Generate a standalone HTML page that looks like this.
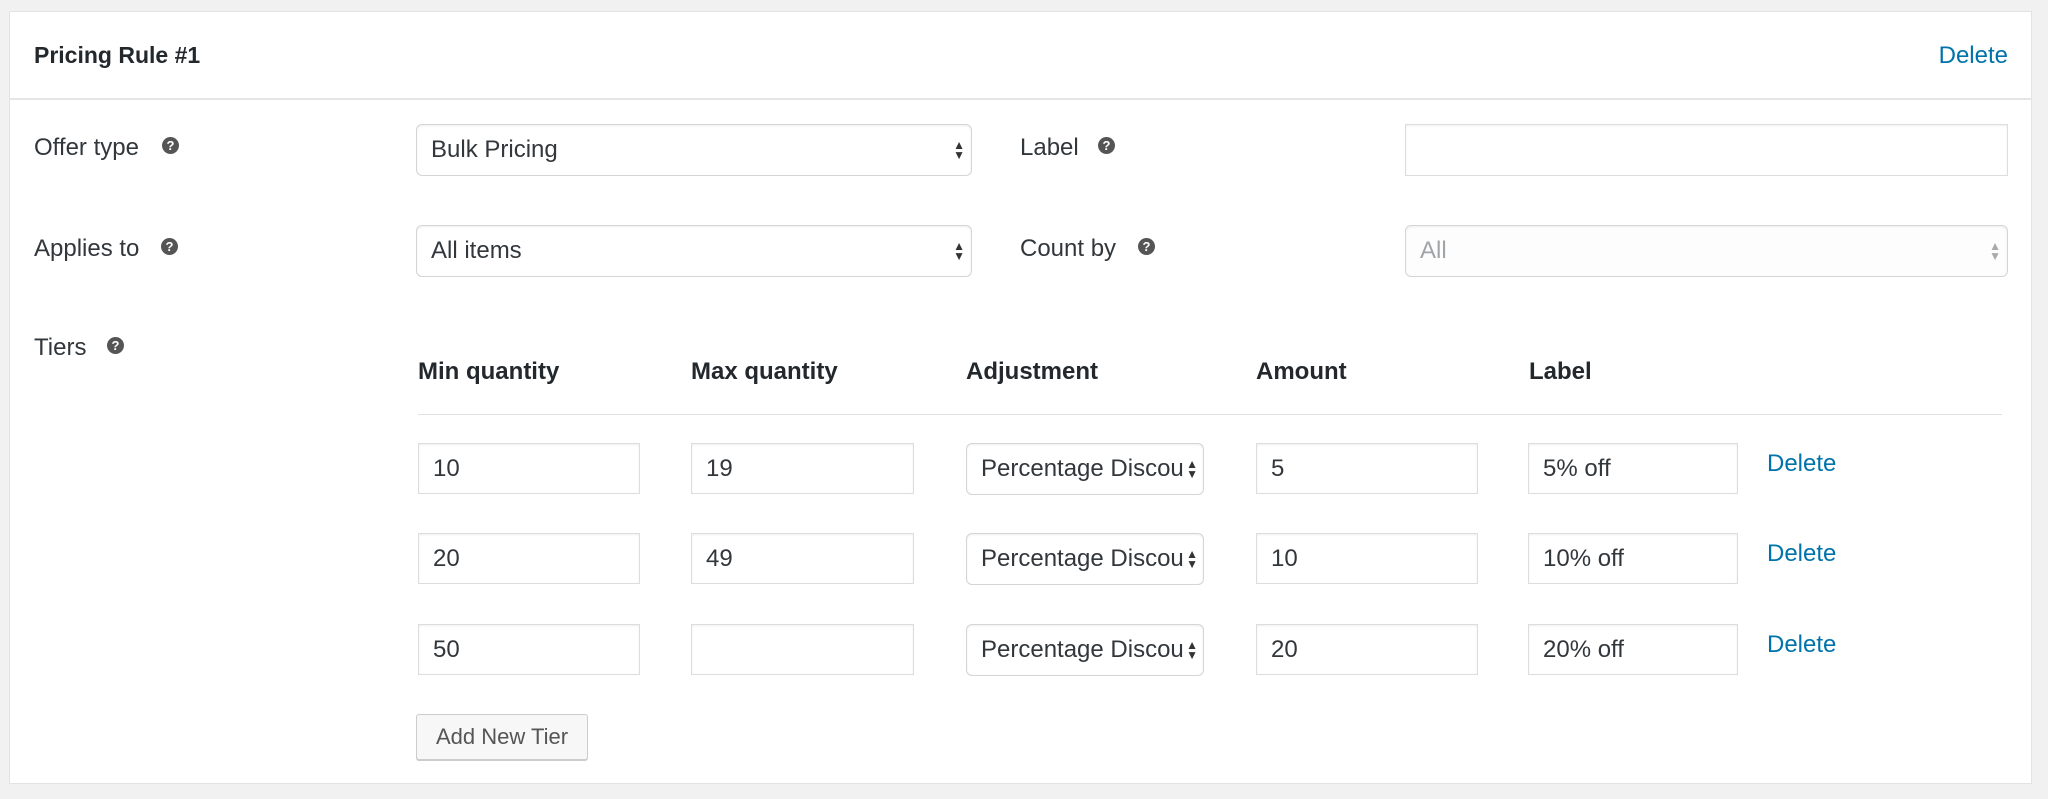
<!DOCTYPE html>
<html><head><meta charset="utf-8"><style>
*{box-sizing:border-box;margin:0;padding:0}
body{width:2048px;height:799px;background:#f1f1f1;font-family:"Liberation Sans",Arial,sans-serif;color:#32373c;position:relative;overflow:hidden}
.panel{position:absolute;left:9px;top:11px;width:2023px;height:773px;background:#fff;border:1px solid #e3e3e3}
.hline{position:absolute;left:9px;top:98px;width:2023px;height:2px;background:#e5e5e5}
.a{position:absolute;white-space:nowrap}
.t{font-size:24px;line-height:26px;color:#32373c}
.b{font-weight:bold;color:#23282d}
.link{color:#0073aa;font-size:24px;line-height:26px}
.box{position:absolute;border:1px solid #ddd;box-shadow:inset 0 1px 2px rgba(0,0,0,.07);background:#fff;font-size:24px;color:#32373c;padding-left:14px;display:flex;align-items:center;white-space:nowrap;overflow:hidden}
.sel{border-radius:6px;border-color:#d5d5d5}
.sel span{display:block;overflow:hidden;white-space:nowrap}
.arr{position:absolute;right:6px;top:50%;transform:translateY(-50%);font-size:12px;line-height:10px;color:#333;text-align:center}
.help{position:absolute;width:17px;height:17px;border-radius:50%;background:#555;color:#fff;font-size:13px;font-weight:bold;line-height:17px;text-align:center}
.btn{position:absolute;left:416px;top:714px;width:172px;height:46px;border:1px solid #ccc;border-radius:3px;background:#f7f7f7;box-shadow:0 1px 0 #ccc;font-size:22px;color:#555;display:flex;align-items:center;justify-content:center}
</style></head><body>
<div class="panel"></div>
<div class="hline"></div>
<div class="a t b" style="left:34px;top:42px;font-size:23px">Pricing Rule #1</div>
<div class="a link" style="right:40px;top:43px">Delete</div>

<div class="a t" style="left:34px;top:135px">Offer type</div><div class="help" style="left:162px;top:137px">?</div>
<div class="box sel" style="left:416px;top:124px;width:556px;height:52px"><span>Bulk Pricing</span><div class="arr">▲<br>▼</div></div>
<div class="a t" style="left:1020px;top:135px">Label</div><div class="help" style="left:1098px;top:137px">?</div>
<div class="box" style="left:1405px;top:124px;width:603px;height:52px"></div>

<div class="a t" style="left:34px;top:236px">Applies to</div><div class="help" style="left:161px;top:238px">?</div>
<div class="box sel" style="left:416px;top:225px;width:556px;height:52px"><span>All items</span><div class="arr">▲<br>▼</div></div>
<div class="a t" style="left:1020px;top:236px">Count by</div><div class="help" style="left:1138px;top:238px">?</div>
<div class="box sel" style="left:1405px;top:225px;width:603px;height:52px;color:#a0a5aa;background:#fdfdfd"><span>All</span><div class="arr" style="color:#aaa">▲<br>▼</div></div>

<div class="a t" style="left:34px;top:335px">Tiers</div><div class="help" style="left:107px;top:337px">?</div>

<div class="a t b" style="left:418px;top:359px">Min quantity</div>
<div class="a t b" style="left:691px;top:359px">Max quantity</div>
<div class="a t b" style="left:966px;top:359px">Adjustment</div>
<div class="a t b" style="left:1256px;top:359px">Amount</div>
<div class="a t b" style="left:1529px;top:359px">Label</div>
<div class="a" style="left:418px;top:414px;width:1584px;height:1px;background:#e1e1e1"></div>

<div class="box" style="left:418px;top:443px;width:222px;height:51px">10</div>
<div class="box" style="left:691px;top:443px;width:223px;height:51px">19</div>
<div class="box sel" style="left:966px;top:443px;width:238px;height:52px"><span style="width:204px">Percentage Discount</span><div class="arr" style="right:5px">▲<br>▼</div></div>
<div class="box" style="left:1256px;top:443px;width:222px;height:51px">5</div>
<div class="box" style="left:1528px;top:443px;width:210px;height:51px">5% off</div>
<div class="a link" style="left:1767px;top:451px">Delete</div>

<div class="box" style="left:418px;top:533px;width:222px;height:51px">20</div>
<div class="box" style="left:691px;top:533px;width:223px;height:51px">49</div>
<div class="box sel" style="left:966px;top:533px;width:238px;height:52px"><span style="width:204px">Percentage Discount</span><div class="arr" style="right:5px">▲<br>▼</div></div>
<div class="box" style="left:1256px;top:533px;width:222px;height:51px">10</div>
<div class="box" style="left:1528px;top:533px;width:210px;height:51px">10% off</div>
<div class="a link" style="left:1767px;top:541px">Delete</div>

<div class="box" style="left:418px;top:624px;width:222px;height:51px">50</div>
<div class="box" style="left:691px;top:624px;width:223px;height:51px"></div>
<div class="box sel" style="left:966px;top:624px;width:238px;height:52px"><span style="width:204px">Percentage Discount</span><div class="arr" style="right:5px">▲<br>▼</div></div>
<div class="box" style="left:1256px;top:624px;width:222px;height:51px">20</div>
<div class="box" style="left:1528px;top:624px;width:210px;height:51px">20% off</div>
<div class="a link" style="left:1767px;top:632px">Delete</div>

<div class="btn">Add New Tier</div>
</body></html>
